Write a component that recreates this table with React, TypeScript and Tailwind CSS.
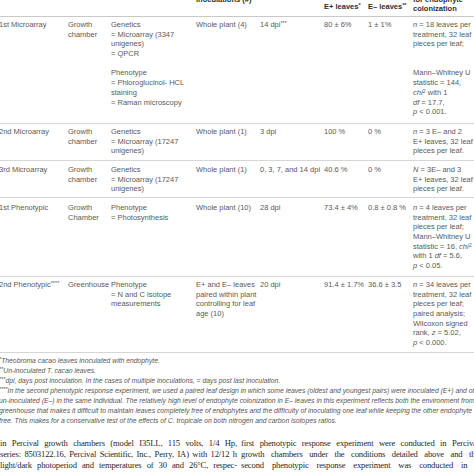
import React from "react"

type Line = React.ReactNode

const cols = "grid grid-cols-[71px_43px_85px_64px_64px_44px_45px_66px]"

const Cell = ({ lines, className = "" }: { lines: Line[]; className?: string }) => (
  <div className={"whitespace-nowrap " + className}>
    {lines.map((l, i) => (
      <div key={i} className="h-[9.7px]">
        {l === "" ? "\u00a0" : l}
      </div>
    ))}
  </div>
)

const I = ({ children }: { children: React.ReactNode }) => <i>{children}</i>
const Sup = ({ children }: { children: React.ReactNode }) => (
  <span className="relative top-[-2px] text-[5.5px]">{children}</span>
)

const rows: { pad: string; cells: Line[][] }[] = [
  {
    pad: "pt-[3px] pb-[6px]",
    cells: [
      ["1st Microarray"],
      ["Growth", "chamber"],
      [
        "Genetics",
        "= Microarray (3347",
        "unigenes)",
        "= QPCR",
        "",
        "Phenotype",
        "= Phloroglucinol- HCL",
        "staining",
        "= Raman microscopy",
      ],
      ["Whole plant (4)"],
      [<>14 dpi<Sup>***</Sup></>],
      ["80 ± 6%"],
      ["1 ± 1%"],
      [
        <><I>n</I> = 18 leaves per</>,
        "treatment, 32 leaf",
        "pieces per leaf;",
        "",
        "",
        "Mann–Whitney U",
        "statistic = 144,",
        <><I>chi</I><Sup>2</Sup> with 1</>,
        <><I>df</I> = 17.7,</>,
        <><I>p</I> &lt; 0.001.</>,
      ],
    ],
  },
  {
    pad: "pt-[3px] pb-[4px]",
    cells: [
      ["2nd Microarray"],
      ["Growth", "chamber"],
      ["Genetics", "= Microarray (17247", "unigenes)"],
      ["Whole plant (1)"],
      ["3 dpi"],
      ["100 %"],
      ["0 %"],
      [<><I>n</I> = 3 E– and 2</>, "E+ leaves, 32 leaf", "pieces per leaf."],
    ],
  },
  {
    pad: "pt-[4px] pb-[3px]",
    cells: [
      ["3rd Microarray"],
      ["Growth", "chamber"],
      ["Genetics", "= Microarray (17247", "unigenes)"],
      ["Whole plant (1)"],
      ["0, 3, 7, and 14 dpi"],
      ["40.6 %"],
      ["0 %"],
      [<><I>N</I> = 3E– and 3</>, "E+ leaves, 32 leaf", "pieces per leaf."],
    ],
  },
  {
    pad: "pt-[5px] pb-[5px]",
    cells: [
      ["1st Phenotypic"],
      ["Growth", "Chamber"],
      ["Phenotype", "= Photosynthesis"],
      ["Whole plant (10)"],
      ["28 dpi"],
      ["73.4 ± 4%"],
      ["0.8 ± 0.8 %"],
      [
        <><I>n</I> = 4 leaves per</>,
        "treatment, 32 leaf",
        "pieces per leaf;",
        "Mann–Whitney U",
        <>statistic = 16, <I>chi</I><Sup>2</Sup></>,
        <>with 1 <I>df</I> = 5.6,</>,
        <><I>p</I> &lt; 0.05.</>,
      ],
    ],
  },
  {
    pad: "pt-[3px] pb-[4px]",
    cells: [
      [<>2nd Phenotypic<Sup>****</Sup></>],
      ["Greenhouse"],
      ["Phenotype", "= N and C isotope", "measurements"],
      ["E+ and E– leaves", "paired within plant", "controlling for leaf", "age (10)"],
      ["20 dpi"],
      ["91.4 ± 1.7%"],
      ["36.6 ± 3.5"],
      [
        <><I>n</I> = 34 leaves per</>,
        "treatment, 32 leaf",
        "pieces per leaf;",
        "paired analysis;",
        "Wilcoxon signed",
        <>rank, <I>z</I> = 5.02,</>,
        <><I>p</I> &lt; 0.000.</>,
      ],
    ],
  },
]

const notes: Line[] = [
  <><Sup>*</Sup>Theobroma cacao leaves inoculated with endophyte.</>,
  <><Sup>**</Sup>Un-inoculated T. cacao leaves.</>,
  <><Sup>***</Sup>dpi, days post inoculation. In the cases of multiple inoculations, = days post last inoculation.</>,
  <><Sup>****</Sup>In the second phenotypic response experiment, we used a paired leaf design in which some leaves (oldest and youngest pairs) were inoculated (E+) and others</>,
  "un-inoculated (E–) in the same individual. The relatively high level of endophyte colonization in E– leaves in this experiment reflects both the environment from the",
  "greenhouse that makes it difficult to maintain leaves completely free of endophytes and the difficulty of inoculating one leaf while keeping the other endophyte",
  "free. This makes for a conservative test of the effects of C. tropicale on both nitrogen and carbon isotopes ratios.",
]

const left = [
  "in Percival growth chambers (model I35LL, 115 volts, 1/4 Hp,",
  "series: 8503122.16, Percival Scientific, Inc., Perry, IA) with 12/12 h",
  "light/dark photoperiod and temperatures of 30 and 26°C, respec-",
]
const right = [
  "first phenotypic response experiment were conducted in Percival",
  "growth chambers under the conditions detailed above and the",
  "second phenotypic response experiment was conducted in a",
]

const Para = ({ lines }: { lines: string[] }) => (
  <div className="text-[8.6px] tracking-[-0.15px] leading-[11px] text-[#1f1f1f] font-['Liberation_Serif',serif]">
    {lines.map((l) => (
      <div key={l} className="text-justify [text-align-last:justify]">
        {l}
      </div>
    ))}
  </div>
)

export default function App() {
  return (
    <div className="w-[474px] h-[474px] overflow-hidden bg-white">
      <div className="mt-[-15px] ml-[-3px] w-[484px] font-['Liberation_Sans',Arial,sans-serif]">
        <div className="text-[7.5px] leading-[9.7px] text-[#5a5a5a]">
          {/* header row, only its lower edge is in view */}
          <div className={cols + " h-[32px] border-b border-[#c9c9c9] font-bold text-[#2e2e2e]"}>
            <Cell lines={[""]} />
            <Cell lines={[""]} />
            <Cell lines={[""]} />
            <Cell lines={["", "inoculations (#)"]} />
            <Cell lines={[""]} />
            <Cell className="pt-[17px]" lines={[<>E+ leaves<Sup>*</Sup></>]} />
            <Cell className="pt-[17px]" lines={[<>E– leaves<Sup>**</Sup></>]} />
            <Cell lines={["", "for endophyte", "colonization"]} />
          </div>
          {rows.map((r, i) => (
            <div key={i} className={cols + " border-b border-[#d6d6d6] " + r.pad}>
              {r.cells.map((c, j) => (
                <Cell key={j} className={j === 0 ? "pl-[2px]" : ""} lines={c} />
              ))}
            </div>
          ))}
        </div>

        <div className="mt-[3px] pl-[2px] text-[6.8px] leading-[10px] italic text-[#555] whitespace-nowrap">
          {notes.map((n, i) => (
            <div key={i}>{n}</div>
          ))}
        </div>

        <div className="mt-[12px] pl-[3px] grid grid-cols-[237px_238px] gap-[4px]">
          <Para lines={left} />
          <Para lines={right} />
        </div>
      </div>
    </div>
  )
}
